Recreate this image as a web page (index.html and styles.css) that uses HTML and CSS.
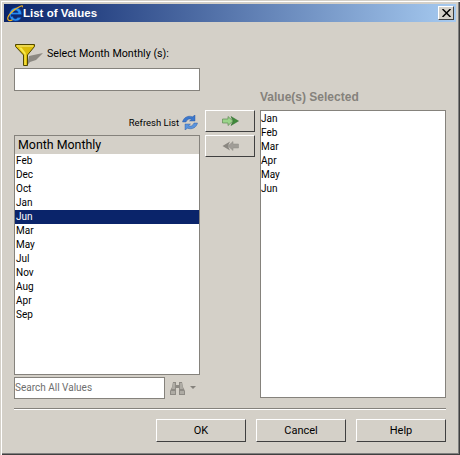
FILE: index.html
```html
<!DOCTYPE html>
<html>
<head>
    <title>List of Values</title>
    <link rel="stylesheet" href="styles.css">
</head>
<body>
    <div class="window">
        <div class="titlebar">
            <svg class="ie-logo" width="16" height="17" viewBox="0 0 16 17">
                <path d="M4 9.500h10.500c.2-4.200-2.300-6.800-5.700-6.800-3.700 0-6.300 3-6.300 6.900 0 3.900 2.600 6.400 6.200 6.400 2.700 0 4.700-1.200 5.500-3.400H10.700c-.5.900-1.200 1.300-2.200 1.300-1.500 0-2.500-1.100-2.600-2.500H4z M5.900 7.700c.2-1.400 1.200-2.300 2.700-2.300 1.400 0 2.400.9 2.500 2.300z" fill="#2b94f5" fill-rule="evenodd" stroke="#0a3fa8" stroke-width=".6"/>
                <path d="M1 14.500C-.5 12 6 4 13.500 1.200c1.800-.6 2.700-.2 2.300 1.300M1 14.500c.6 1.500 2.600 1.400 4.500.2" fill="none" stroke="#f5b21a" stroke-width="1.200"/>
            </svg>
            <span class="title-text">List of Values</span>
            <button class="close-button">
                <svg width="9" height="8" viewBox="0 0 9 8"><path d="M.5 0l8 8M8.500 0l-8 8" stroke="#000" stroke-width="1.500"/></svg>
            </button>
        </div>

        <div class="content">
            <div class="filter-label">
                <svg class="funnel" width="29" height="23" viewBox="0 0 29 23">
                    <path d="M12 21.500L14 12l14-3-7 7-6 2z" fill="#8c8982"/>
                    <path d="M.5.500h19v2L12.500 11v10.500h-4V11L.5 2.500z" fill="#dcbc0a" stroke="#4f4700"/>
                    <path d="M2 1.500h16v1H2z" fill="#fbf18c"/>
                    <path d="M3.500 3.500L9.500 10.500v10.500h1.200V9L6.500 3.500z" fill="#f8e84e"/>
                </svg>
                <span class="filter-text">Select Month Monthly (s):</span>
            </div>
            <div class="filter-input"></div>

            <div class="lists">
                <div class="left-col">
                    <div class="refresh-row">
                        <span class="refresh-text">Refresh List</span>
                        <svg width="16" height="15" viewBox="0 0 16 15">
                            <path d="M.5 7C1.500 2.500 6 0 10.500 1.800L13 0v6H7.500l2-1.700C7.300 3.300 5 4.300 4 7z" fill="#3c78cc" stroke="#1f4f9c" stroke-width=".4"/>
                            <path d="M15.500 8c-1 4.500-5.500 7-10 5.200L3 15V9h5.500l-2 1.700c2.200 1 4.500 0 5.500-2.700z" fill="#5a94dc" stroke="#1f4f9c" stroke-width=".4"/>
                        </svg>
                    </div>
                    <div class="month-list">
                        <div class="list-header">Month Monthly</div>
                        <div class="list-row">Feb</div>
                        <div class="list-row">Dec</div>
                        <div class="list-row">Oct</div>
                        <div class="list-row">Jan</div>
                        <div class="list-row selected">Jun</div>
                        <div class="list-row">Mar</div>
                        <div class="list-row">May</div>
                        <div class="list-row">Jul</div>
                        <div class="list-row">Nov</div>
                        <div class="list-row">Aug</div>
                        <div class="list-row">Apr</div>
                        <div class="list-row">Sep</div>
                    </div>
                    <div class="search-row">
                        <div class="search-input">Search All Values</div>
                        <svg class="binoculars" width="15" height="14" viewBox="0 0 15 14">
                            <path d="M3 1h3v3h3V1h3l1 5 2 4v4H9V7H6v7H0v-4l2-4z" fill="#8e8b85"/>
                            <path d="M3 2h2v6H2zM10 2h2l1 6h-3zM1 10h4v3H1zM10 10h4v3h-4z" fill="#aeaba4"/>
                        </svg>
                        <span class="caret"></span>
                    </div>
                </div>

                <div class="move-buttons">
                    <button class="move-button">
                        <svg width="17" height="10" viewBox="0 0 17 10">
                            <path d="M9 .5L16.500 5 9 9.500 11 5z" fill="#3f8a3a" stroke="#2f6b2c" stroke-width=".5"/>
                            <path d="M.5 3H6V.5L11 5 6 9.500V7H.5z" fill="#9ad48a" stroke="#5f8a55" stroke-width=".7"/>
                        </svg>
                    </button>
                    <button class="move-button">
                        <svg width="17" height="10" viewBox="0 0 17 10">
                            <path d="M8 .5L.5 5 8 9.500 6 5z" fill="#8a8781"/>
                            <path d="M16.500 3H11V.5L6 5l5 4.500V7h5.500z" fill="#a09d97" stroke="#8f8c86" stroke-width=".5"/>
                        </svg>
                    </button>
                </div>

                <div class="right-col">
                    <div class="selected-label">Value(s) Selected</div>
                    <div class="selected-list">
                        <div class="list-row">Jan</div>
                        <div class="list-row">Feb</div>
                        <div class="list-row">Mar</div>
                        <div class="list-row">Apr</div>
                        <div class="list-row">May</div>
                        <div class="list-row">Jun</div>
                    </div>
                </div>
            </div>

            <div class="separator"></div>

            <div class="footer">
                <button class="dialog-button">OK</button>
                <button class="dialog-button">Cancel</button>
                <button class="dialog-button">Help</button>
            </div>
        </div>
    </div>
</body>
</html>
```

FILE: styles.css
```css
body {
    margin: 0;
    padding: 0;
    background: #d4d0c8;
    overflow: hidden;
    font-family: Roboto, sans-serif;
    font-size: 10px;
    color: #000;
}

.window {
    width: 460px;
    height: 455px;
    box-sizing: border-box;
    padding: 4px 4px 0 4px;
    background: #d4d0c8;
    box-shadow: inset 1px 1px 0 #d4d0c8, inset 2px 2px 0 #fff, inset -1px -1px 0 #404040, inset -2px -2px 0 #808080;
}

.titlebar {
    height: 18px;
    display: flex;
    align-items: center;
    background: linear-gradient(to right, #0a246a, #a6caf0);
    color: #fff;
    font-family: "Liberation Sans", sans-serif;
    font-size: 11.5px;
    font-weight: bold;
}

.ie-logo {
    flex-shrink: 0;
    margin: 0 0 0 3px;
}

.title-text {
    flex-grow: 1;
}

.close-button {
    width: 16px;
    height: 14px;
    margin-right: 2px;
    padding: 0;
    display: flex;
    align-items: center;
    justify-content: center;
    background: #d4d0c8;
    border: 1px solid;
    border-color: #fff #404040 #404040 #fff;
}

.content {
    padding: 21px 10px 0 10px;
}

.filter-label {
    display: flex;
    align-items: center;
    height: 25px;
}

.filter-text {
    margin-bottom: 4px;
    font-size: 10.7px;
}

.funnel {
    margin: 0 3px 0 1px;
    flex-shrink: 0;
}

.filter-input {
    width: 186px;
    height: 23px;
    box-sizing: border-box;
    background: #fff;
    border: 1px solid #85827c;
}

.lists {
    display: grid;
    grid-template-columns: 186px 60px 186px;
}

.left-col {
    margin-top: 19px;
}

.refresh-row {
    height: 25px;
    display: flex;
    align-items: center;
    justify-content: flex-end;
    gap: 3px;
    padding-right: 2px;
    padding-bottom: 1px;
    box-sizing: border-box;
}

.refresh-text {
    font-size: 9.5px;
}

.month-list {
    height: 240px;
    box-sizing: border-box;
    background: #fff;
    border: 1px solid #85827c;
}

.list-header {
    height: 18px;
    padding-left: 3px;
    background: #d4d0c8;
    font-size: 12.4px;
    line-height: 18px;
}

.list-row {
    height: 14px;
    line-height: 14px;
    padding-left: 1px;
}

.selected {
    background: #0a246a;
    color: #fff;
}

.search-row {
    display: flex;
    align-items: center;
    height: 23px;
    margin-top: 1px;
}

.search-input {
    width: 151px;
    height: 22px;
    box-sizing: border-box;
    background: #fff;
    border: 1px solid #85827c;
    color: #6e6e6e;
    line-height: 19px;
}

.binoculars {
    margin-left: 5px;
}

.caret {
    margin-left: 5px;
    border-left: 3px solid transparent;
    border-right: 3px solid transparent;
    border-top: 3px solid #85827c;
}

.move-buttons {
    display: flex;
    flex-direction: column;
    gap: 3px;
    padding: 19px 5px 0 5px;
}

.move-button {
    width: 50px;
    height: 22px;
    padding: 0;
    display: flex;
    align-items: center;
    justify-content: center;
    background: #d4d0c8;
    border: 1px solid;
    border-color: #fff #404040 #404040 #fff;
}

.selected-label {
    height: 19px;
    color: #85827c;
    font-family: "Liberation Sans", sans-serif;
    font-size: 12px;
    font-weight: bold;
    line-height: 12px;
}

.selected-list {
    height: 288px;
    box-sizing: border-box;
    padding-top: 1px;
    background: #fff;
    border: 1px solid #85827c;
}

.selected-list .list-row {
    padding-left: 0;
}

.separator {
    height: 1px;
    margin-top: 9px;
    background: #85827c;
    border-bottom: 1px solid #fff;
}

.footer {
    display: flex;
    justify-content: flex-end;
    gap: 10px;
    margin-top: 9px;
}

.dialog-button {
    width: 90px;
    height: 23px;
    padding: 0;
    background: #d4d0c8;
    border: 1px solid;
    border-color: #fff #404040 #404040 #fff;
    font-family: Roboto, sans-serif;
    font-size: 11px;
    color: #000;
}
```
